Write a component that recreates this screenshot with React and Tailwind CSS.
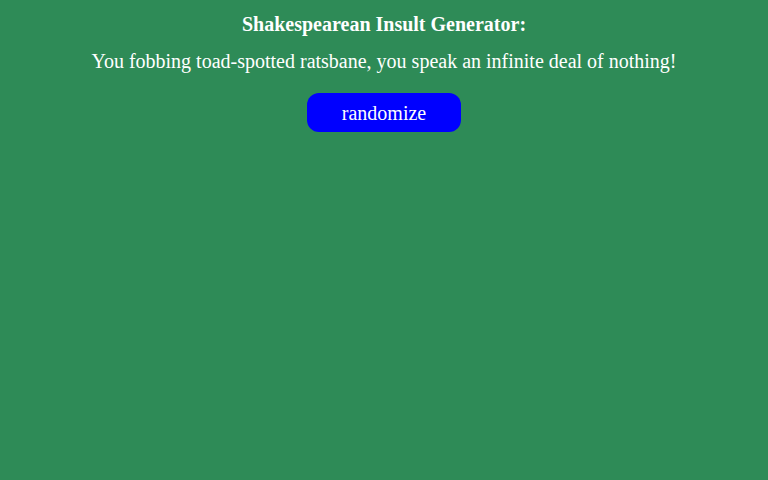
export default function App() {
  return (
    <div className="min-h-[480px] bg-[#2e8b57] text-white text-center font-['Liberation_Serif',serif]">
      <h1 className="pt-[13px] text-[20px] font-bold leading-[23px]">Shakespearean Insult Generator:</h1>
      <p className="mt-[14px] text-[20px] leading-[23px]">
        You fobbing toad-spotted ratsbane, you speak an infinite deal of nothing!
      </p>
      <button className="mt-[20px] w-[154px] h-[39px] bg-[#0000ff] rounded-[12px] text-[20px] text-white">
        randomize
      </button>
    </div>
  )
}
